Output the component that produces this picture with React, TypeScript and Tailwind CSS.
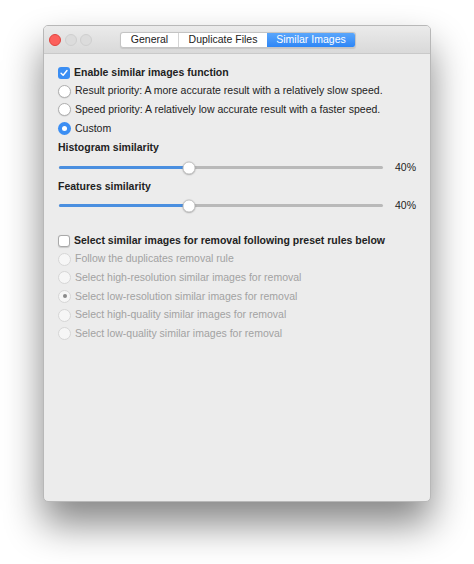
import type { ReactNode } from 'react'

const font = { fontFamily: '"Liberation Sans", Arial, sans-serif' }

function Check({ checked }: { checked: boolean }) {
  if (checked) {
    return (
      <span className="flex h-[12px] w-[12px] shrink-0 items-center justify-center rounded-[3px] bg-[#3b8ef3]">
        <svg viewBox="0 0 12 12" className="h-[10px] w-[10px]">
          <path d="M2.5 6.3 L5 8.7 L9.6 3" fill="none" stroke="#fff" strokeWidth="1.7" strokeLinecap="round" strokeLinejoin="round" />
        </svg>
      </span>
    )
  }
  return (
    <span className="h-[12px] w-[12px] shrink-0 rounded-[3px] border border-[#a9a9a9] bg-white shadow-[0_0.5px_1px_rgba(0,0,0,0.15)]" />
  )
}

function Radio({ selected, disabled }: { selected?: boolean; disabled?: boolean }) {
  if (selected && !disabled) {
    return (
      <span className="flex h-[13px] w-[13px] shrink-0 items-center justify-center rounded-full bg-[#3b8ef3]">
        <span className="h-[5px] w-[5px] rounded-full bg-white" />
      </span>
    )
  }
  return (
    <span
      className={`flex h-[13px] w-[13px] shrink-0 items-center justify-center rounded-full border ${
        disabled ? 'border-[#d6d6d6] bg-[#f6f6f6]' : 'border-[#b0b0b0] bg-white shadow-[0_0.5px_1px_rgba(0,0,0,0.15)]'
      }`}
    >
      {selected && <span className="h-[4px] w-[4px] rounded-full bg-[#8a8a8a]" />}
    </span>
  )
}

function Row({ children, h }: { children: ReactNode; h: string }) {
  return <div className={`flex items-center gap-[4px] ${h}`}>{children}</div>
}

function Slider({ value }: { value: number }) {
  return (
    <div className="flex h-[19px] items-center">
      <div className="relative ml-[1px] h-[3px] w-[324px] rounded-full bg-[#b9b9b9]">
        <div className="absolute left-0 top-0 h-[3px] rounded-full bg-[#4a8fe0]" style={{ width: `${value}%` }} />
        <div
          className="absolute top-1/2 h-[13px] w-[13px] -translate-x-1/2 -translate-y-1/2 rounded-full border border-[#c6c6c6] bg-white shadow-[0_0.5px_1.5px_rgba(0,0,0,0.3)]"
          style={{ left: `${value}%` }}
        />
      </div>
      <span className="ml-[12px] text-[10.5px] text-[#222]">{value}%</span>
    </div>
  )
}

const tabs = ['General', 'Duplicate Files', 'Similar Images']

export default function App() {
  return (
    <div className="min-h-[564px] w-[474px] bg-white pl-[43px] pt-[25px]" style={font}>
      <div className="flex h-[477px] w-[388px] flex-col overflow-hidden rounded-[5px] border border-[#b8b8b8] bg-[#ececec] shadow-[0_22px_38px_rgba(0,0,0,0.48)]">
        <div className="relative flex h-[28px] items-center border-b border-[#c9c9c9] bg-gradient-to-b from-[#ebebeb] to-[#d9d9d9]">
          <div className="flex items-center gap-[3.5px] pl-[5px]">
            <span className="h-[12px] w-[12px] rounded-full border border-[#e0443e] bg-[#fc605c]" />
            <span className="h-[12px] w-[12px] rounded-full border border-[#cfcfcf] bg-[#dcdcdc]" />
            <span className="h-[12px] w-[12px] rounded-full border border-[#cfcfcf] bg-[#dcdcdc]" />
          </div>
          <div className="ml-[28px] flex h-[16px] overflow-hidden rounded-[3px] border border-[#c4c4c4] bg-white shadow-[0_0.5px_1px_rgba(0,0,0,0.1)]">
            {tabs.map((t, i) => (
              <div
                key={t}
                className={`flex items-center justify-center text-[10.5px] ${
                  i === 0 ? 'w-[57px]' : i === 1 ? 'w-[89px] border-l border-[#d4d4d4]' : 'w-[88px]'
                } ${i === 2 ? 'bg-gradient-to-b from-[#5aa6fb] to-[#2d86f6] text-white' : 'text-[#222]'}`}
              >
                {t}
              </div>
            ))}
          </div>
        </div>

        <div className="flex flex-col pl-[14px] pt-[9px] text-[10.5px] text-[#222]">
          <Row h="h-[19px]">
            <Check checked />
            <span className="font-bold">Enable similar images function</span>
          </Row>
          <Row h="h-[18px]">
            <Radio />
            <span>Result priority: A more accurate result with a relatively slow speed.</span>
          </Row>
          <Row h="h-[19px]">
            <Radio />
            <span>Speed priority: A relatively low accurate result with a faster speed.</span>
          </Row>
          <Row h="h-[19px]">
            <Radio selected />
            <span>Custom</span>
          </Row>
          <div className="flex h-[20px] items-center font-bold">Histogram similarity</div>
          <Slider value={40} />
          <div className="flex h-[19px] items-center font-bold">Features similarity</div>
          <Slider value={40} />

          <div className="mt-[16px]" />
          <Row h="h-[19px]">
            <Check checked={false} />
            <span className="font-bold">Select similar images for removal following preset rules below</span>
          </Row>
          <div className="flex flex-col text-[#a2a2a2]">
            <Row h="h-[18.6px]">
              <Radio disabled />
              <span>Follow the duplicates removal rule</span>
            </Row>
            <Row h="h-[18.6px]">
              <Radio disabled />
              <span>Select high-resolution similar images for removal</span>
            </Row>
            <Row h="h-[18.6px]">
              <Radio disabled selected />
              <span>Select low-resolution similar images for removal</span>
            </Row>
            <Row h="h-[18.6px]">
              <Radio disabled />
              <span>Select high-quality similar images for removal</span>
            </Row>
            <Row h="h-[18.6px]">
              <Radio disabled />
              <span>Select low-quality similar images for removal</span>
            </Row>
          </div>
        </div>
      </div>
    </div>
  )
}
